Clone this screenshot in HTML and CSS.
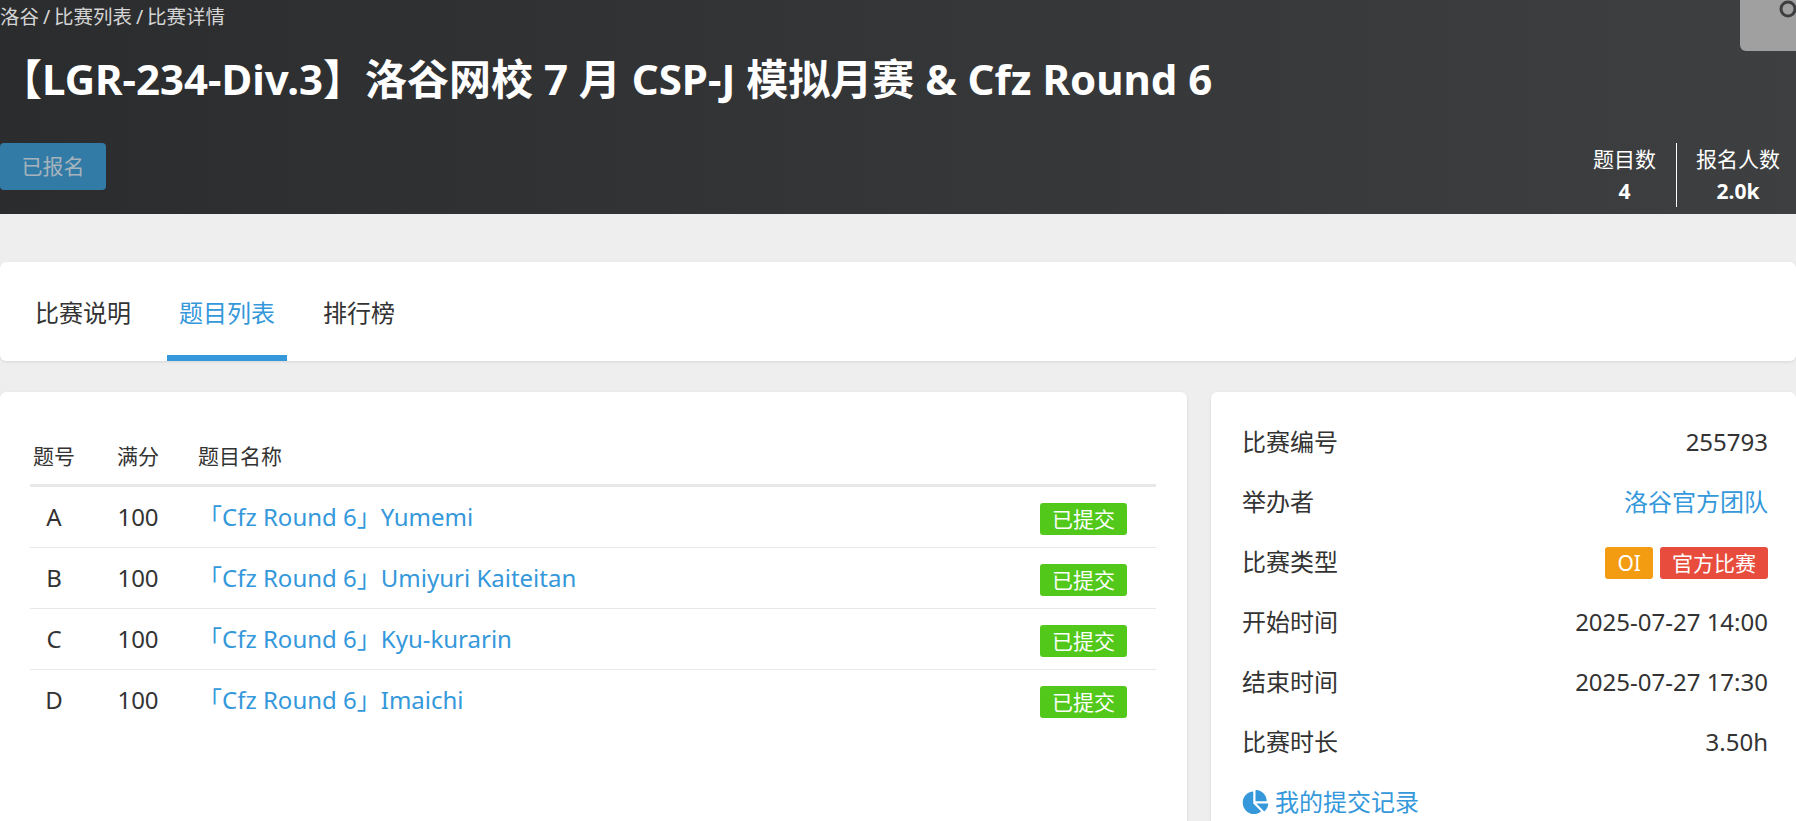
FILE: index.html
```html
<!DOCTYPE html>
<html lang="zh-CN">

<head>
  <meta charset="utf-8">
  <title>比赛详情</title>
  <link rel="stylesheet" href="styles.css">
</head>

<body>
  <!-- Contest banner -->
  <header class="banner">
    <nav class="crumbs"><a>洛谷</a> / <a>比赛列表</a> / <a>比赛详情</a></nav>
    <h1>【LGR-234-Div.3】洛谷网校 7 月 CSP-J 模拟月赛 &amp; Cfz Round 6</h1>
    <div class="banner_foot">
      <button class="btn_joined">已报名</button>
      <div class="stats">
        <div class="stat">
          <span>题目数</span>
          <strong>4</strong>
        </div>
        <div class="stat">
          <span>报名人数</span>
          <strong>2.0k</strong>
        </div>
      </div>
    </div>
  </header>

  <!-- Floating search button, cut off by the window edge -->
  <div class="search_fab">
    <svg width="22" height="22" viewBox="0 0 22 22">
      <circle cx="9" cy="9" r="7" fill="none" stroke="currentColor" stroke-width="3" />
    </svg>
  </div>

  <main class="content">
    <nav class="card tabs">
      <a class="tab">比赛说明</a>
      <a class="tab active">题目列表</a>
      <a class="tab">排行榜</a>
    </nav>

    <div class="columns">
      <section class="card problems">
        <table>
          <thead>
            <tr>
              <th class="col_id">题号</th>
              <th class="col_score">满分</th>
              <th>题目名称</th>
              <th></th>
            </tr>
          </thead>
          <tbody>
            <tr>
              <td class="col_id">A</td>
              <td class="col_score">100</td>
              <td><a class="link">「Cfz Round 6」Yumemi</a></td>
              <td class="col_status"><span class="tag green">已提交</span></td>
            </tr>
            <tr>
              <td class="col_id">B</td>
              <td class="col_score">100</td>
              <td><a class="link">「Cfz Round 6」Umiyuri Kaiteitan</a></td>
              <td class="col_status"><span class="tag green">已提交</span></td>
            </tr>
            <tr>
              <td class="col_id">C</td>
              <td class="col_score">100</td>
              <td><a class="link">「Cfz Round 6」Kyu-kurarin</a></td>
              <td class="col_status"><span class="tag green">已提交</span></td>
            </tr>
            <tr>
              <td class="col_id">D</td>
              <td class="col_score">100</td>
              <td><a class="link">「Cfz Round 6」Imaichi</a></td>
              <td class="col_status"><span class="tag green">已提交</span></td>
            </tr>
          </tbody>
        </table>
      </section>

      <aside class="card info">
        <div class="info_row"><span>比赛编号</span><span>255793</span></div>
        <div class="info_row"><span>举办者</span><a class="link">洛谷官方团队</a></div>
        <div class="info_row">
          <span>比赛类型</span>
          <span class="tags"><span class="tag orange">OI</span><span class="tag red">官方比赛</span></span>
        </div>
        <div class="info_row"><span>开始时间</span><span>2025-07-27 14:00</span></div>
        <div class="info_row"><span>结束时间</span><span>2025-07-27 17:30</span></div>
        <div class="info_row"><span>比赛时长</span><span>3.50h</span></div>
        <div class="info_row">
          <a class="link records">
            <svg width="27" height="24" viewBox="0 0 544 512">
              <path fill="currentColor" d="M527.79 288H290.5l158.03 158.03c6.04 6.04 15.98 6.53 22.19.68 38.7-36.46 65.32-85.61 73.13-140.86 1.34-9.46-6.51-17.85-16.06-17.85zm-15.83-64.8C503.72 103.74 408.26 8.28 288.8.04 279.68-.59 272 7.1 272 16.24V240h223.77c9.14 0 16.82-7.68 16.19-16.8zM224 288V50.71c0-9.55-8.39-17.4-17.84-16.06C86.99 51.49-4.1 155.6.14 280.37 4.5 408.51 114.83 513.59 243.03 511.98c50.4-.63 96.97-16.87 135.26-44.03 7.9-5.6 8.42-17.23 1.57-24.08L224 288z" />
            </svg>
            我的提交记录
          </a>
        </div>
      </aside>
    </div>
  </main>
</body>

</html>
```

FILE: styles.css
```css
html,
body {
  height: 100%;
}

body {
  margin: 0;
  overflow: hidden;
  background: #eeeeee;
  color: #333333;
  font-family: "Noto Sans", "Noto Sans CJK SC", sans-serif;
  font-size: 24px;
  line-height: 1.5;
}

.banner {
  box-sizing: border-box;
  height: 214px;
  padding-top: 3px;
  background: linear-gradient(90deg, #2b2c2e, #3e3f41);
  color: #ffffff;
}

.crumbs {
  font-size: 19.5px;
  line-height: 28px;
  word-spacing: -1.2px;
  color: #d5d5d5;
}

h1 {
  margin: 16px 0 0;
  font-size: 42px;
  line-height: 63px;
  font-weight: 700;
}

.banner_foot {
  display: flex;
  justify-content: space-between;
  margin-top: 33px;
}

.btn_joined {
  width: 106px;
  height: 47px;
  padding: 0;
  border: 0;
  border-radius: 4px;
  background: #337ba7;
  color: #a5b3bc;
  font: inherit;
  font-size: 21px;
}

.stats {
  display: flex;
}

.stat {
  display: flex;
  flex-direction: column;
  align-items: center;
  padding: 0 20px;
  font-size: 21px;
  line-height: 32px;
}

.stat + .stat {
  padding: 0 16px 0 19px;
  border-left: 1px solid #ffffff;
}

.stat strong {
  font-size: 21px;
}

.search_fab {
  position: absolute;
  top: 0;
  right: 0;
  width: 56px;
  height: 51px;
  border-bottom-left-radius: 6px;
  background: #a0a0a0;
  color: #3d3e40;
  overflow: hidden;
}

.search_fab svg {
  position: absolute;
  top: 0;
  left: 39px;
}

.content {
  box-sizing: border-box;
  height: calc(100% - 214px);
  padding-top: 48px;
  overflow: hidden;
}

.card {
  border-radius: 6px;
  background: #ffffff;
  box-shadow: 0 1px 3px rgba(0, 0, 0, 0.1);
}

.tabs {
  display: flex;
  gap: 24px;
  height: 99px;
  padding-left: 23px;
}

.tab {
  box-sizing: border-box;
  padding: 0 12px;
  line-height: 101px;
}

.tab.active {
  border-bottom: 6px solid #3498db;
  color: #3498db;
}

.columns {
  display: grid;
  grid-template-columns: 1187px 585px;
  gap: 24px;
  margin-top: 31px;
}

.problems {
  padding: 30px 31px 40px 30px;
  min-height: 600px;
}

table {
  width: 100%;
  border-collapse: collapse;
}

th {
  height: 50px;
  padding: 0 0 12px;
  border-bottom: 3px solid #e8e8e8;
  font-size: 21px;
  font-weight: 400;
  text-align: left;
  vertical-align: bottom;
}

td {
  height: 60px;
  padding: 0;
  border-bottom: 1px solid #e8e8e8;
}

tbody tr:last-child td {
  border-bottom: 0;
}

.col_id {
  width: 48px;
  text-align: center;
}

.col_score {
  width: 120px;
  text-align: center;
}

th.col_id,
th.col_score {
  text-align: center;
}

.col_status {
  width: 116px;
}

.link {
  color: #3498db;
}

.tag {
  display: inline-block;
  height: 32px;
  padding: 0 12px;
  border-radius: 3px;
  color: #ffffff;
  font-size: 21px;
  line-height: 32px;
  vertical-align: middle;
}

.green {
  background: #52c91a;
}

.orange {
  background: #f39c11;
}

.red {
  background: #e74c3c;
}

.tags {
  display: flex;
  gap: 7px;
  margin-top: 1px;
}

.info {
  padding: 20px 28px 40px 31px;
}

.info_row {
  display: flex;
  justify-content: space-between;
  align-items: center;
  height: 60px;
}

.records {
  display: flex;
  align-items: center;
  gap: 6px;
}
```
